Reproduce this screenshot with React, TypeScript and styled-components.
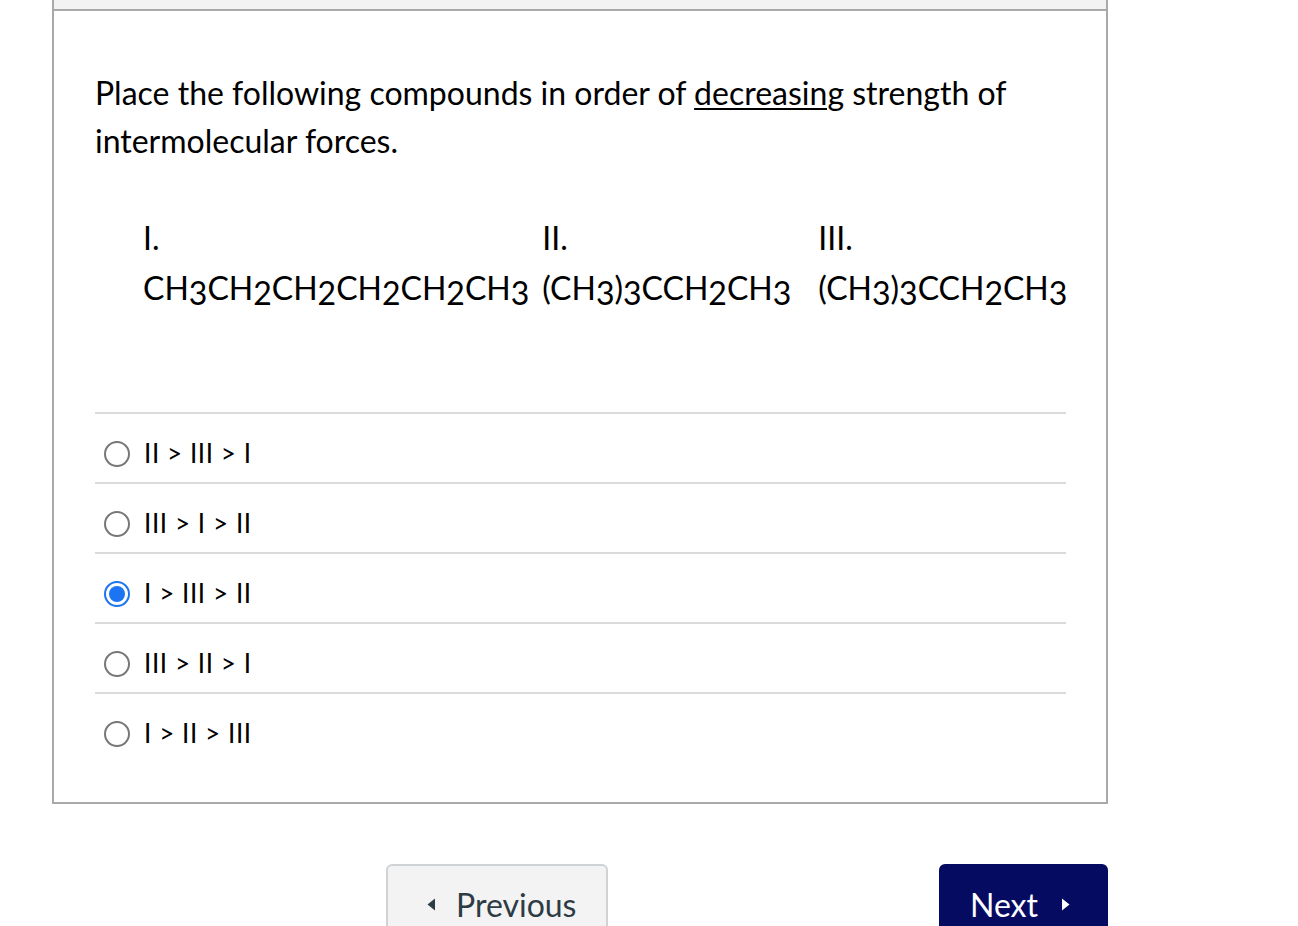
import { useState } from "react"
import styled, { createGlobalStyle } from "styled-components"

const GlobalStyle = createGlobalStyle`
  html, body {
    margin: 0;
    padding: 0;
    background: #fff;
  }
  body {
    font-family: Lato, "Liberation Sans", sans-serif;
    color: #000;
  }
`

const Page = styled.div`
  width: 1298px;
  height: 926px;
  overflow: hidden;
  padding-left: 52px;
  box-sizing: border-box;
`

const Card = styled.section`
  width: 1056px;
  box-sizing: border-box;
  border: 2px solid #a9a9a9;
  border-top: none;
`

const CardTop = styled.div`
  height: 9px;
  background: #f3f3f3;
  border-bottom: 2px solid #a9a9a9;
`

const CardBody = styled.div`
  padding: 58px 40px 40px 41px;
`

const Question = styled.p`
  margin: 0;
  font-size: 32px;
  line-height: 48px;
`

const Underline = styled.span`
  text-decoration: underline;
  text-underline-offset: 3px;
  text-decoration-thickness: 2px;
`

const Compounds = styled.table`
  margin: 48px 0 0 42px;
  border-collapse: collapse;
  font-size: 32px;
`

const Cell = styled.td<{ $wide?: boolean }>`
  padding: 0 7px 0 ${({ $wide }) => ($wide ? "20px" : "6px")};
  text-align: left;
  vertical-align: top;
  white-space: nowrap;
  line-height: 50px;
`

const Sub = styled.sub`
  font-size: 1em;
  vertical-align: -5px;
  line-height: 0;
`

const Options = styled.ul`
  list-style: none;
  margin: 99px 0 0 0;
  padding: 0;
`

const Option = styled.li`
  display: flex;
  align-items: center;
  gap: 14px;
  height: 70px;
  padding-top: 10px;
  box-sizing: border-box;
  border-top: 2px solid #dadada;
  cursor: pointer;
`

const Radio = styled.span<{ $checked: boolean }>`
  width: 26px;
  height: 26px;
  margin-left: 9px;
  margin-top: 2px;
  box-sizing: border-box;
  border-radius: 50%;
  border: 2px solid ${({ $checked }) => ($checked ? "#1b74f1" : "#777")};
  display: flex;
  align-items: center;
  justify-content: center;
  flex-shrink: 0;

  &::after {
    content: "";
    width: 16px;
    height: 16px;
    border-radius: 50%;
    background: #1b74f1;
    display: ${({ $checked }) => ($checked ? "block" : "none")};
  }
`

const OptionText = styled.span`
  font-size: 26px;
  letter-spacing: 0.6px;
`

const Nav = styled.nav`
  width: 1056px;
  display: flex;
  justify-content: space-between;
  margin-top: 60px;
  padding-left: 334px;
  box-sizing: border-box;
`

const NavButton = styled.button<{ $primary?: boolean }>`
  display: flex;
  align-items: center;
  gap: ${({ $primary }) => ($primary ? "22px" : "19px")};
  height: 84px;
  padding: ${({ $primary }) => ($primary ? "0 35px 4px 29px" : "0 30px 4px 38px")};
  box-sizing: border-box;
  border-radius: 6px;
  font-family: Lato, "Liberation Sans", sans-serif;
  font-size: 32px;
  cursor: pointer;
  border: 2px solid ${({ $primary }) => ($primary ? "#060b62" : "#cfd3d6")};
  background: ${({ $primary }) => ($primary ? "#060b62" : "#f3f3f3")};
  color: ${({ $primary }) => ($primary ? "#fff" : "#2d3b45")};
`

const Caret = styled.svg`
  width: 11px;
  height: 15px;
  flex-shrink: 0;
`

const options = [
  "II > III > I",
  "III > I > II",
  "I > III > II",
  "III > II > I",
  "I > II > III",
]

export default function App() {
  const [selected, setSelected] = useState(2)

  return (
    <Page>
      <GlobalStyle />
      <Card>
        <CardTop />
        <CardBody>
          <Question>
            Place the following compounds in order of <Underline>decreasing</Underline> strength of
            intermolecular forces.
          </Question>

          <Compounds>
            <tbody>
              <tr>
                <Cell>I.</Cell>
                <Cell>II.</Cell>
                <Cell $wide>III.</Cell>
              </tr>
              <tr>
                <Cell>
                  CH<Sub>3</Sub>CH<Sub>2</Sub>CH<Sub>2</Sub>CH<Sub>2</Sub>CH<Sub>2</Sub>CH<Sub>3</Sub>
                </Cell>
                <Cell>
                  (CH<Sub>3</Sub>)<Sub>3</Sub>CCH<Sub>2</Sub>CH<Sub>3</Sub>
                </Cell>
                <Cell $wide>
                  (CH<Sub>3</Sub>)<Sub>3</Sub>CCH<Sub>2</Sub>CH<Sub>3</Sub>
                </Cell>
              </tr>
            </tbody>
          </Compounds>

          <Options>
            {options.map((label, i) => (
              <Option key={label} onClick={() => setSelected(i)}>
                <Radio $checked={selected === i} />
                <OptionText>{label}</OptionText>
              </Option>
            ))}
          </Options>
        </CardBody>
      </Card>

      <Nav>
        <NavButton>
          <Caret viewBox="0 0 11 15">
            <path d="M9 1.5 L1.5 7.5 L9 13.5 Z" fill="#2d3b45" />
          </Caret>
          Previous
        </NavButton>
        <NavButton $primary>
          Next
          <Caret viewBox="0 0 11 15">
            <path d="M2 1.5 L9.5 7.5 L2 13.5 Z" fill="#fff" />
          </Caret>
        </NavButton>
      </Nav>
    </Page>
  )
}
